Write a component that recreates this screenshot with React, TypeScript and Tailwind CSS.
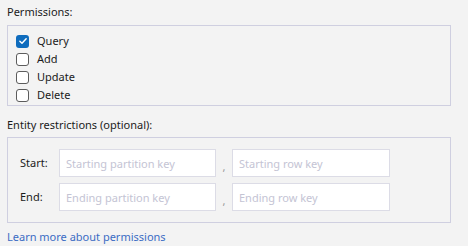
import { useState } from "react";

const font = { fontFamily: '"Noto Sans", "Segoe UI", sans-serif' };

function Check({ label, checked, onChange }: { label: string; checked: boolean; onChange: () => void }) {
  return (
    <label className="flex h-[18px] items-center gap-[8px] cursor-pointer">
      <span
        onClick={onChange}
        className={
          checked
            ? "flex h-[13px] w-[13px] items-center justify-center rounded-[3px] bg-[#0f6cbd]"
            : "flex h-[13px] w-[13px] items-center justify-center rounded-[3px] border border-[#5c5c5c] bg-white"
        }
      >
        {checked && (
          <svg viewBox="0 0 12 12" className="h-[10px] w-[10px]" fill="none">
            <path d="M2.2 6.3 4.8 8.8 9.8 3.3" stroke="white" strokeWidth="1.7" strokeLinecap="round" strokeLinejoin="round" />
          </svg>
        )}
      </span>
      <span className="text-[11px] text-[#1b1b1b]">{label}</span>
    </label>
  );
}

function KeyRow({ label, first, second }: { label: string; first: string; second: string }) {
  return (
    <div className="flex h-[28px] items-center">
      <span className="w-[39px] text-[11px] text-[#1b1b1b]">{label}</span>
      <input
        placeholder={first}
        className="h-[28px] w-[157px] border border-[#dcdce6] bg-white px-[6px] text-[11px] text-[#1b1b1b] outline-none placeholder:text-[#c4c4d4]"
        style={font}
      />
      <span className="flex h-full w-[16px] items-end justify-center pb-[5px] text-[11px] leading-none text-[#9a9a9a]">,</span>
      <input
        placeholder={second}
        className="h-[28px] w-[158px] border border-[#dcdce6] bg-white px-[6px] text-[11px] text-[#1b1b1b] outline-none placeholder:text-[#c4c4d4]"
        style={font}
      />
    </div>
  );
}

export default function App() {
  const [perms, setPerms] = useState({ Query: true, Add: false, Update: false, Delete: false });
  type Key = keyof typeof perms;

  return (
    <div className="h-[246px] w-[468px] overflow-hidden bg-[#f3f3f3] pl-[7px] pt-[3px]" style={font}>
      <div className="w-[444px]">
        <div className="h-[18px] text-[11px] leading-[18px] text-[#1b1b1b]">Permissions:</div>
        <div className="mt-[4px] border border-[#cfcfe0] px-[8px] pb-[1px] pt-[6px]">
          {(Object.keys(perms) as Key[]).map((k) => (
            <Check key={k} label={k} checked={perms[k]} onChange={() => setPerms({ ...perms, [k]: !perms[k] })} />
          ))}
        </div>

        <div className="mt-[10px] h-[18px] text-[11px] leading-[18px] text-[#1b1b1b]">Entity restrictions (optional):</div>
        <div className="mt-[3px] flex flex-col gap-[6px] border border-[#cfcfe0] pb-[11px] pl-[12px] pt-[11px]">
          <KeyRow label="Start:" first="Starting partition key" second="Starting row key" />
          <KeyRow label="End:" first="Ending partition key" second="Ending row key" />
        </div>

        <a href="#" className="mt-[5px] block text-[11px] leading-[18px] text-[#3b6cc4]">
          Learn more about permissions
        </a>
      </div>
    </div>
  );
}
